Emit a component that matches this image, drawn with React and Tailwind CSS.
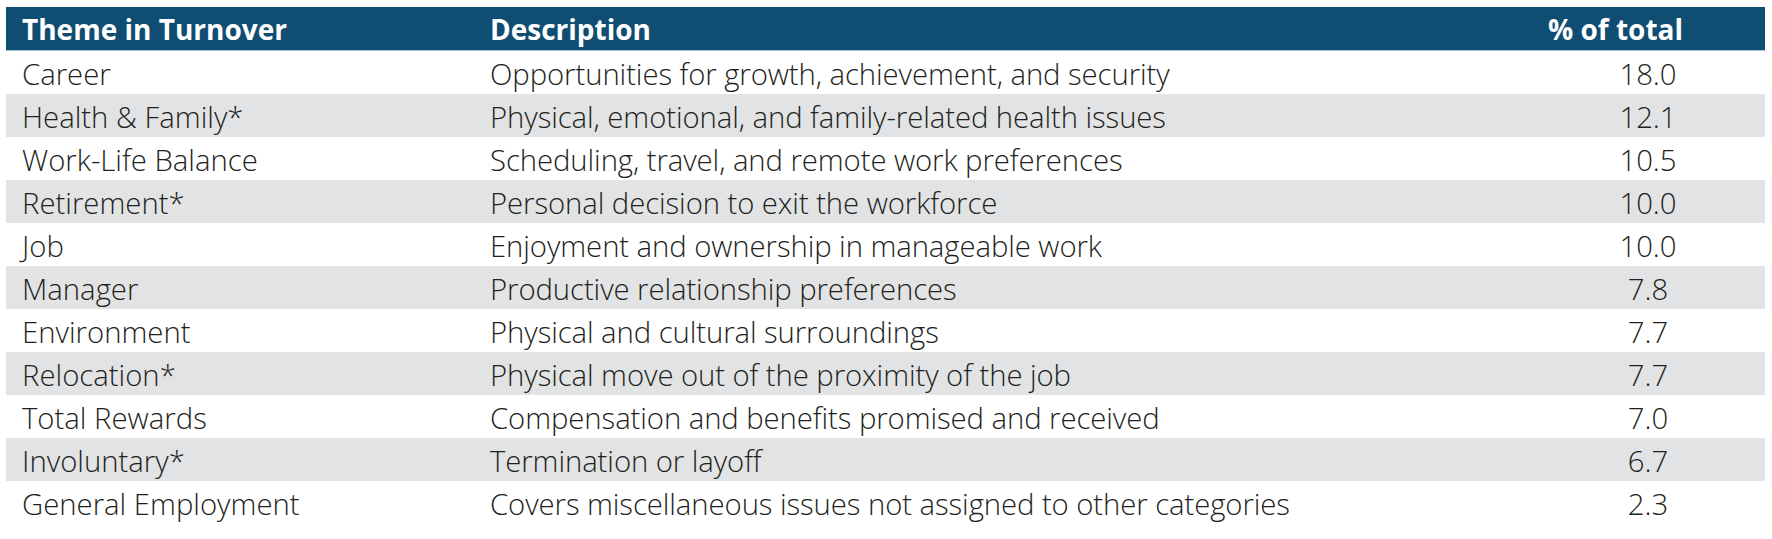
import React from "react";

const rows = [
  ["Career", "Opportunities for growth, achievement, and security", "18.0"],
  ["Health & Family*", "Physical, emotional, and family-related health issues", "12.1"],
  ["Work-Life Balance", "Scheduling, travel, and remote work preferences", "10.5"],
  ["Retirement*", "Personal decision to exit the workforce", "10.0"],
  ["Job", "Enjoyment and ownership in manageable work", "10.0"],
  ["Manager", "Productive relationship preferences", "7.8"],
  ["Environment", "Physical and cultural surroundings", "7.7"],
  ["Relocation*", "Physical move out of the proximity of the job", "7.7"],
  ["Total Rewards", "Compensation and benefits promised and received", "7.0"],
  ["Involuntary*", "Termination or layoff", "6.7"],
  ["General Employment", "Covers miscellaneous issues not assigned to other categories", "2.3"],
];

export default function App() {
  return (
    <div
      className="w-[1772px] h-[539px] bg-white pt-[7px] pl-[6px]"
      style={{ fontFamily: '"Open Sans", "Noto Sans", sans-serif' }}
    >
      <div className="w-[1759px]">
        <div className="flex h-[44px] items-center bg-[#0f4d72] border-b border-[#9fbfd2] text-white font-bold text-[28px]">
          <div className="w-[484px] pl-[16px] pt-[1px]">Theme in Turnover</div>
          <div className="flex-1 pt-[1px]">Description</div>
          <div className="w-[300px] text-right pr-[82px] pt-[1px]">% of total</div>
        </div>
        {rows.map((r, i) => (
          <div
            key={i}
            className={`flex h-[43px] items-center text-[29.3px] font-light text-[#231f20] ${
              i % 2 === 1 ? "bg-[#e2e3e4]" : "bg-white"
            }`}
          >
            <div className="w-[484px] pl-[16px] pt-[4px]">{r[0]}</div>
            <div className="flex-1 pt-[4px] tracking-[-0.08px]">{r[1]}</div>
            <div className="w-[200px] mr-[17px] text-center pt-[4px]">{r[2]}</div>
          </div>
        ))}
      </div>
    </div>
  );
}
